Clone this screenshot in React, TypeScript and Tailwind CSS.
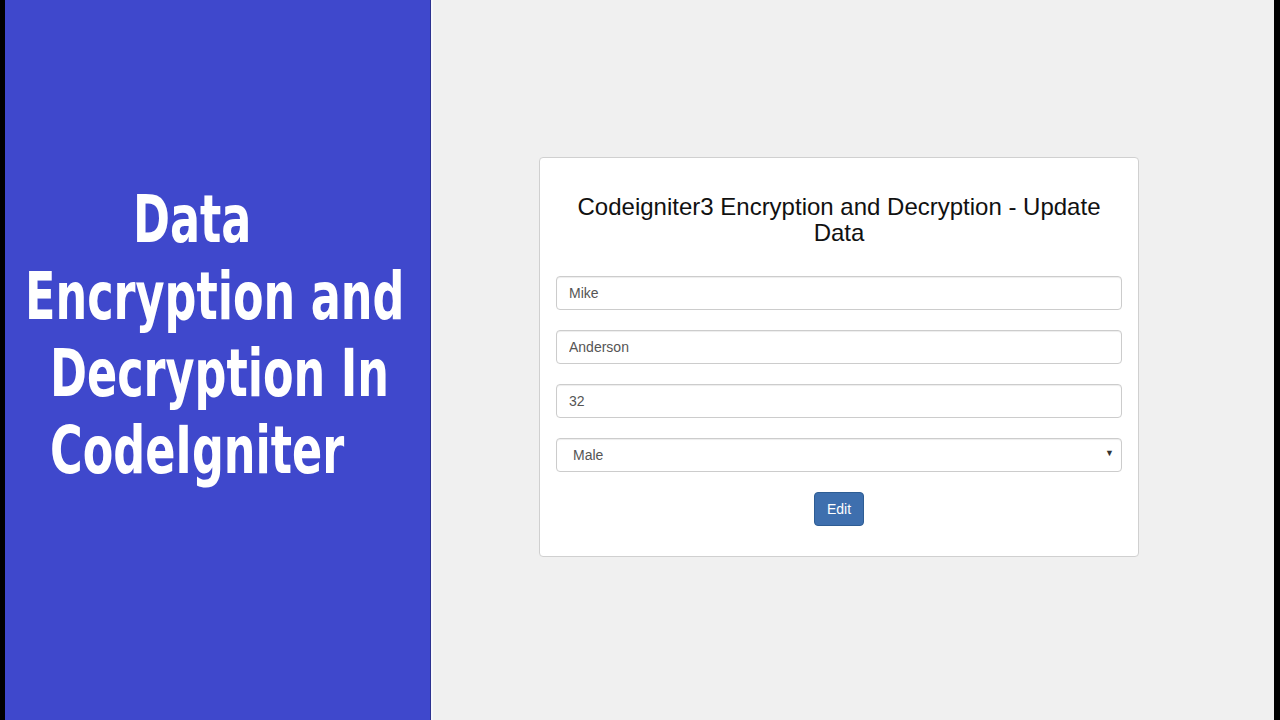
import React from 'react';

const titleFont = { fontFamily: '"DejaVu Sans Condensed", "Liberation Sans", sans-serif' };

const Field: React.FC<{ value: string }> = ({ value }) => (
  <input
    readOnly
    value={value}
    className="w-full h-[34px] px-3 text-[14px] text-[#555] bg-white border border-[#ccc] rounded-[4px] shadow-[inset_0_1px_1px_rgba(0,0,0,0.075)] outline-none"
  />
);

export default function App() {
  return (
    <div className="flex h-screen w-full overflow-hidden" style={{ fontFamily: '"Liberation Sans", Arial, sans-serif' }}>
      <div className="w-[5px] bg-black shrink-0" />
      <div className="w-[425px] shrink-0 bg-[#3f48cc] pt-[181px] text-white font-bold text-[66px] leading-[77px] overflow-hidden" style={titleFont}>
        <div className="pl-[128px]"><span className="inline-block origin-left scale-x-[0.75] whitespace-nowrap">Data</span></div>
        <div className="pl-[20px]"><span className="inline-block origin-left scale-x-[0.75] whitespace-nowrap">Encryption and</span></div>
        <div className="pl-[45px]"><span className="inline-block origin-left scale-x-[0.75] whitespace-nowrap">Decryption In</span></div>
        <div className="pl-[45px]"><span className="inline-block origin-left scale-x-[0.75] whitespace-nowrap">CodeIgniter</span></div>
      </div>
      <div className="w-px bg-[#2c3290] shrink-0" />
      <div className="w-[2px] bg-[#f7f7fb] shrink-0" />
      <div className="flex-1 bg-[#f0f0f0] pt-[157px] pl-[106px]">
        <div className="w-[600px] bg-white border border-[#d0d0d0] rounded-[4px] px-4 pt-[36px] pb-[30px]">
          <h3 className="text-center text-[24px] leading-[26px] text-[#111]">
            Codeigniter3 Encryption and Decryption - Update Data
          </h3>
          <div className="mt-[30px] flex flex-col gap-[20px]">
            <Field value="Mike" />
            <Field value="Anderson" />
            <Field value="32" />
            <div className="relative">
              <select
                defaultValue="Male"
                className="appearance-none w-full h-[34px] pl-4 pr-8 text-[14px] text-[#555] bg-white border border-[#ccc] rounded-[4px] shadow-[inset_0_1px_1px_rgba(0,0,0,0.075)] outline-none"
              >
                <option>Male</option>
                <option>Female</option>
              </select>
              <span className="absolute right-[8px] top-[9px] text-[9px] text-[#333] pointer-events-none">▼</span>
            </div>
          </div>
          <div className="mt-[20px] flex justify-center">
            <button className="h-[34px] w-[50px] text-[14px] text-white bg-[#3e6fae] border border-[#2e5d94] rounded-[4px]">
              Edit
            </button>
          </div>
        </div>
      </div>
      <div className="w-[6px] bg-black shrink-0" />
    </div>
  );
}
